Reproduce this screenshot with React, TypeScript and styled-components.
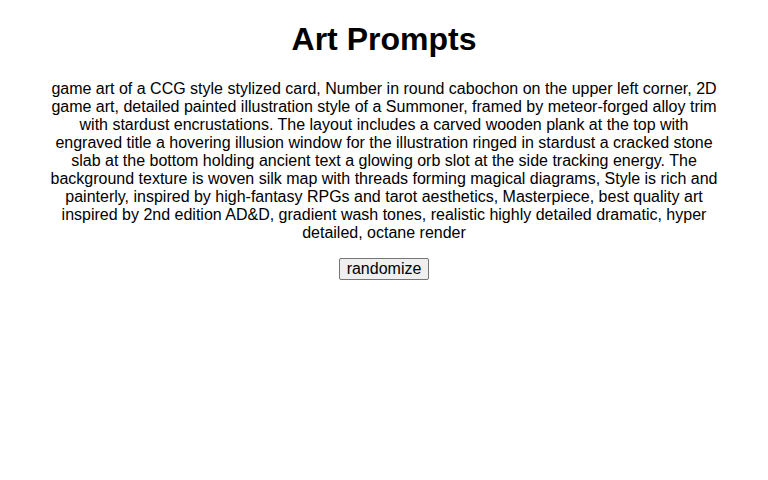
import React, { useState } from "react";
import styled, { createGlobalStyle } from "styled-components";

const GlobalStyle = createGlobalStyle`
  body {
    margin: 0;
    background: #ffffff;
    color: #000000;
    font-family: "Liberation Sans", Arial, sans-serif;
  }
`;

const Page = styled.main`
  max-width: 680px;
  margin: 0 auto;
  text-align: center;
`;

const Title = styled.h1`
  font-size: 32px;
  font-weight: bold;
  margin: 0.67em 0;
`;

const Prompt = styled.p`
  font-size: 16px;
  margin: 16px 0;
`;

const Button = styled.button`
  font-family: "Liberation Sans", Arial, sans-serif;
  font-size: 16px;
  color: #000000;
  background: #efefef;
  border: 1px solid #767676;
  border-radius: 2px;
  padding: 1px 7px;
  cursor: pointer;
`;

const PROMPT =
  "game art of a CCG style stylized card, Number in round cabochon on the upper left corner, 2D game art, detailed painted illustration style of a Summoner, framed by meteor-forged alloy trim with stardust encrustations. The layout includes a carved wooden plank at the top with engraved title a hovering illusion window for the illustration ringed in stardust a cracked stone slab at the bottom holding ancient text a glowing orb slot at the side tracking energy. The background texture is woven silk map with threads forming magical diagrams, Style is rich and painterly, inspired by high-fantasy RPGs and tarot aesthetics, Masterpiece, best quality art inspired by 2nd edition AD&D, gradient wash tones, realistic highly detailed dramatic, hyper detailed, octane render";

export default function App() {
  const [prompt] = useState(PROMPT);
  return (
    <>
      <GlobalStyle />
      <Page>
        <Title>Art Prompts</Title>
        <Prompt>{prompt}</Prompt>
        <Button type="button">randomize</Button>
      </Page>
    </>
  );
}
